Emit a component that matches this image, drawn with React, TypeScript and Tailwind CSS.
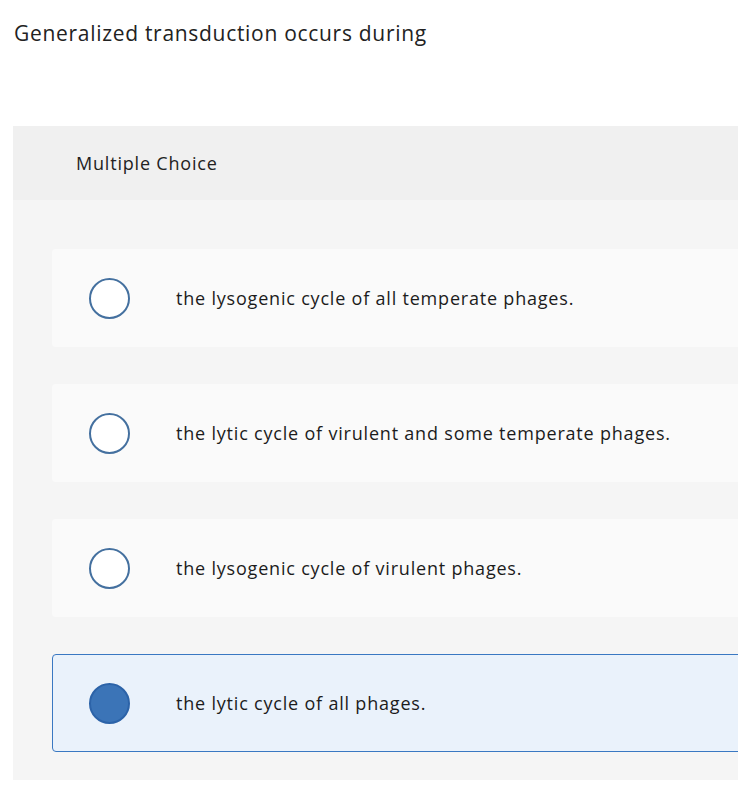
import React from 'react';

const options = [
  { text: 'the lysogenic cycle of all temperate phages.', selected: false },
  { text: 'the lytic cycle of virulent and some temperate phages.', selected: false },
  { text: 'the lysogenic cycle of virulent phages.', selected: false },
  { text: 'the lytic cycle of all phages.', selected: true },
];

export default function App() {
  return (
    <div className="bg-white h-[799px] w-[738px] overflow-hidden" style={{ fontFamily: '"Open Sans", "Noto Sans", sans-serif' }}>
      {/* Question */}
      <h1 className="pl-[14px] pt-[19px] text-[21px] leading-[28px] tracking-[0.7px] text-[#222] font-normal">
        Generalized transduction occurs during
      </h1>

      {/* Answer panel */}
      <div className="mt-[79px] ml-[13px] w-[780px] bg-[#f5f5f5]">
        <div className="h-[74px] bg-[#f0f0f0] flex items-center pl-[63px] text-[18px] tracking-[0.8px] text-[#222]">
          Multiple Choice
        </div>
        <div className="flex flex-col gap-[37px] pt-[49px] pb-[28px] pl-[39px]">
          {options.map((o) => (
            <OptionRow key={o.text} text={o.text} selected={o.selected} />
          ))}
        </div>
      </div>
    </div>
  );
}

function OptionRow({ text, selected }: { text: string; selected: boolean }) {
  return (
    <div
      className={
        selected
          ? 'h-[98px] rounded-[4px] border border-[#3a78c2] bg-[#eaf2fb] flex items-center pl-[36px]'
          : 'h-[98px] rounded-[4px] bg-[#fafafa] flex items-center pl-[37px]'
      }
    >
      {selected ? (
        <span className="w-[41px] h-[41px] rounded-full bg-[#3b74b7] border-2 border-[#2c63a8] shrink-0" />
      ) : (
        <span className="w-[41px] h-[41px] rounded-full bg-white border-2 border-[#44709f] shrink-0" />
      )}
      <span className="ml-[46px] text-[18px] tracking-[0.8px] text-[#1c1c1c]">{text}</span>
    </div>
  );
}
